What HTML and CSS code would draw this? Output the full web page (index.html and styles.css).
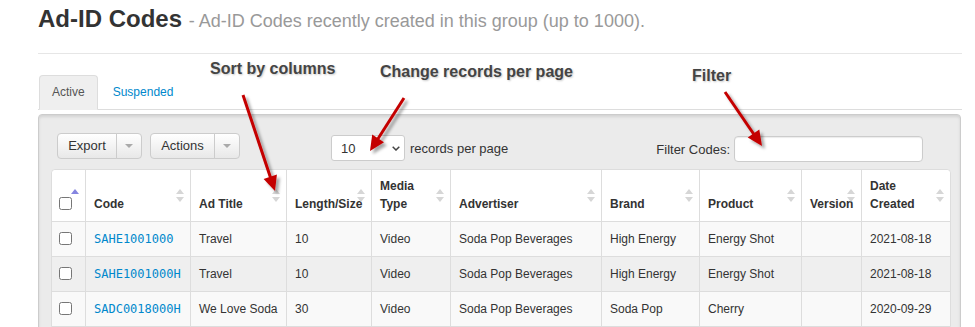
FILE: index.html
```html
<!DOCTYPE html>
<html>
<head>
<meta charset="utf-8">
<title>Ad-ID Codes</title>
<link rel="stylesheet" href="styles.css">
</head>
<body>
<div class="page">
  <h1 class="title">Ad-ID Codes <small>- Ad-ID Codes recently created in this group (up to 1000).</small></h1>
  <hr class="rule">
  <ul class="tabs">
    <li class="tab active"><a>Active</a></li>
    <li class="tab"><a>Suspended</a></li>
  </ul>
  <div class="panel">
    <div class="toolbar">
      <div class="btn-group">
        <button class="btn main export">Export</button><button class="btn caret-btn"><span class="caret"></span></button>
      </div>
      <div class="btn-group">
        <button class="btn main actions">Actions</button><button class="btn caret-btn"><span class="caret"></span></button>
      </div>
      <div class="per-page">
        <span class="sel">
          <select><option>10</option><option>25</option><option>50</option><option>100</option></select>
          <svg class="chev" width="8" height="5" viewBox="0 0 8 5"><path d="M0.7 0.7 L4 4 L7.3 0.7" fill="none" stroke="#444" stroke-width="1.5"/></svg>
        </span>
        <span class="per-label">records per page</span>
      </div>
      <div class="filter">
        <label>Filter Codes:</label><input type="text" class="filter-input">
      </div>
    </div>
    <table class="grid">
      <thead>
        <tr>
          <th class="c-check"><input type="checkbox"><span class="sort asc"></span></th>
          <th class="c-code">Code<span class="sort"></span></th>
          <th class="c-title">Ad Title<span class="sort"></span></th>
          <th class="c-len">Length/Size<span class="sort"></span></th>
          <th class="c-media">Media Type<span class="sort"></span></th>
          <th class="c-adv">Advertiser<span class="sort"></span></th>
          <th class="c-brand">Brand<span class="sort"></span></th>
          <th class="c-prod">Product<span class="sort"></span></th>
          <th class="c-ver">Version<span class="sort"></span></th>
          <th class="c-date">Date Created<span class="sort"></span></th>
        </tr>
      </thead>
      <tbody>
        <tr>
          <td class="c-check"><input type="checkbox"></td>
          <td><a class="code">SAHE1001000</a></td>
          <td>Travel</td><td>10</td><td>Video</td><td>Soda Pop Beverages</td><td>High Energy</td><td>Energy Shot</td><td></td><td>2021-08-18</td>
        </tr>
        <tr>
          <td class="c-check"><input type="checkbox"></td>
          <td><a class="code">SAHE1001000H</a></td>
          <td>Travel</td><td>10</td><td>Video</td><td>Soda Pop Beverages</td><td>High Energy</td><td>Energy Shot</td><td></td><td>2021-08-18</td>
        </tr>
        <tr>
          <td class="c-check"><input type="checkbox"></td>
          <td><a class="code">SADC0018000H</a></td>
          <td>We Love Soda</td><td>30</td><td>Video</td><td>Soda Pop Beverages</td><td>Soda Pop</td><td>Cherry</td><td></td><td>2020-09-29</td>
        </tr>
      </tbody>
    </table>
  </div>
</div>

<div class="note note-sort">Sort by columns</div>
<div class="note note-per">Change records per page</div>
<div class="note note-filter">Filter</div>

<svg class="arrows" width="975" height="327" viewBox="0 0 975 327">
  <defs>
    <filter id="sh" x="-50%" y="-50%" width="200%" height="200%">
      <feDropShadow dx="3" dy="3" stdDeviation="1.5" flood-color="#000" flood-opacity="0.35"/>
    </filter>
  </defs>
  <g filter="url(#sh)" fill="#c40000" stroke="#c40000">
    <line x1="243" y1="95" x2="271" y2="179" stroke-width="3"/>
    <polygon points="275,191 276.9,174.6 263.6,179" stroke="none"/>
    <line x1="404" y1="98" x2="377.5" y2="139.5" stroke-width="3"/>
    <polygon points="370,151 384,142.2 372.2,134.6" stroke="none"/>
    <line x1="725" y1="92" x2="754" y2="134.5" stroke-width="3"/>
    <polygon points="762,146 759.3,129.6 747.7,137.6" stroke="none"/>
  </g>
</svg>
</body>
</html>
```

FILE: styles.css
```css
* { box-sizing: border-box; }

html, body {
  margin: 0;
  padding: 0;
  background: #fff;
}

body {
  font-family: "Liberation Sans", Arial, sans-serif;
  color: #333;
  width: 975px;
  height: 327px;
  overflow: hidden;
  position: relative;
}

.page {
  width: 924px;
  margin-left: 38px;
  padding-top: 4px;
}

.title {
  margin: 0;
  height: 30px;
  font-size: 24px;
  line-height: 30px;
  font-weight: bold;
  color: #333;
  white-space: nowrap;
}

.title small {
  font-size: 18px;
  line-height: 18px;
  font-weight: normal;
  color: #999;
}

.rule {
  margin: 19px 0 0;
  border: 0;
  border-top: 1px solid #e6e6e6;
  height: 0;
}

.tabs {
  list-style: none;
  margin: 21px 0 0;
  padding: 0 0 0 1px;
  display: flex;
  border-bottom: 1px solid #ddd;
}

.tab {
  margin-bottom: -1px;
  margin-right: 2px;
}

.tab a {
  display: block;
  padding: 7px 12px 8px;
  line-height: 18px;
  font-size: 12px;
  border: 1px solid transparent;
  border-radius: 4px 4px 0 0;
  color: #0088cc;
  cursor: pointer;
}

.tab.active a {
  color: #555;
  background: #efefef;
  border-color: #ddd;
  border-bottom-color: #efefef;
}

.panel {
  margin-top: 4px;
  margin-right: 1px;
  border: 1px solid #ccc;
  border-radius: 4px;
  background: #ebebeb;
  box-shadow: inset 0 2px 3px rgba(0, 0, 0, 0.10);
  padding: 18px 10px 20px 12px;
}

.toolbar {
  display: flex;
  align-items: flex-start;
  padding-left: 6px;
  height: 29px;
  margin-bottom: 7px;
}

.btn-group {
  display: flex;
}

.btn-group + .btn-group {
  margin-left: 8px;
}

.btn {
  height: 26px;
  font-family: "Liberation Sans", Arial, sans-serif;
  font-size: 13px;
  line-height: 24px;
  color: #333;
  background: linear-gradient(#ffffff, #e8e8e8);
  border: 1px solid #ccc;
  padding: 0;
  margin: 0;
  text-align: center;
}

.btn.main {
  border-radius: 4px 0 0 4px;
}

.btn.export { width: 60px; }
.btn.actions { width: 65px; }

.caret-btn {
  width: 26px;
  margin-left: -1px;
  border-radius: 0 4px 4px 0;
  display: flex;
  align-items: center;
  justify-content: center;
}

.caret {
  display: block;
  width: 0;
  height: 0;
  border-left: 4px solid transparent;
  border-right: 4px solid transparent;
  border-top: 4px solid #aaa;
  margin-top: -1px;
}

.per-page {
  display: flex;
  align-items: center;
  margin-left: 91px;
  margin-top: 2px;
  font-size: 13px;
}

.sel {
  position: relative;
  display: block;
  width: 74px;
  height: 26px;
}

.sel select {
  appearance: none;
  -webkit-appearance: none;
  width: 74px;
  height: 26px;
  border: 1px solid #ccc;
  border-radius: 3px;
  background: #fff;
  font-family: "Liberation Sans", Arial, sans-serif;
  font-size: 13px;
  color: #333;
  padding: 0 0 0 9px;
  margin: 0;
}

.chev {
  position: absolute;
  right: 5px;
  top: 11px;
  pointer-events: none;
}

.per-label {
  margin-left: 5px;
  color: #333;
}

.filter {
  display: flex;
  align-items: center;
  margin-left: auto;
  margin-right: 27px;
  margin-top: 3px;
  font-size: 13px;
  color: #333;
}

.filter-input {
  margin: 0 0 0 4px;
  width: 189px;
  height: 26px;
  border: 1px solid #ccc;
  border-radius: 4px;
  background: #fff;
  box-shadow: inset 0 1px 1px rgba(0, 0, 0, 0.08);
}

.grid {
  width: 900px;
  table-layout: fixed;
  border-collapse: separate;
  border-spacing: 0;
  border: 1px solid #ddd;
  border-radius: 4px 4px 0 0;
  background: #fff;
  font-size: 12px;
  color: #333;
}

.grid th,
.grid td {
  border-left: 1px solid #ddd;
  border-top: 1px solid #ddd;
  padding: 8px;
  line-height: 18px;
  text-align: left;
  white-space: nowrap;
}

.grid th:first-child,
.grid td:first-child {
  border-left: 0;
}

.grid thead th {
  border-top: 0;
  padding: 7px 8px 8px;
  vertical-align: bottom;
  font-weight: bold;
  position: relative;
  white-space: normal;
  background: #fff;
}

.grid thead th:first-child { border-top-left-radius: 4px; }
.grid thead th:last-child { border-top-right-radius: 4px; }

.grid .c-check { width: 33px; padding-left: 7px; padding-right: 0; }
.grid .c-code { width: 105px; }
.grid .c-title { width: 96px; }
.grid .c-len { width: 85px; }
.grid .c-media { width: 79px; }
.grid .c-adv { width: 151px; }
.grid .c-brand { width: 98px; }
.grid .c-prod { width: 102px; }
.grid .c-ver { width: 60px; }
.grid .c-date { width: 89px; }

.grid input[type="checkbox"] {
  margin: 0;
  width: 13px;
  height: 13px;
  vertical-align: -2px;
}

.grid tbody tr td { background: #f9f9f9; }
.grid tbody tr:nth-child(2) td { background: #efefef; }

.code {
  font-family: "DejaVu Sans Mono", "Liberation Mono", monospace;
  font-size: 12px;
  color: #0088cc;
  text-decoration: none;
}

.sort {
  position: absolute;
  right: 6px;
  top: 50%;
  margin-top: -7px;
  width: 8px;
  height: 13px;
}

.sort::before,
.sort::after {
  content: "";
  position: absolute;
  left: 0;
  width: 0;
  height: 0;
  border-left: 4px solid transparent;
  border-right: 4px solid transparent;
}

.sort::before {
  top: 0;
  border-bottom: 5px solid #d6d6d6;
}

.sort::after {
  top: 8px;
  border-top: 5px solid #d6d6d6;
}

.sort.asc::before { border-bottom-color: #8585e0; }
.sort.asc::after { display: none; }

.note {
  position: absolute;
  font-family: "Liberation Sans", Arial, sans-serif;
  font-weight: bold;
  font-size: 16px;
  line-height: 16px;
  color: #444;
  white-space: nowrap;
  text-shadow: 1px 1px 2px rgba(0, 0, 0, 0.22);
}

.note-sort { left: 210px; top: 61px; }
.note-per { left: 380px; top: 64px; }
.note-filter { left: 692px; top: 68px; }

.arrows {
  position: absolute;
  left: 0;
  top: 0;
  pointer-events: none;
}
```
